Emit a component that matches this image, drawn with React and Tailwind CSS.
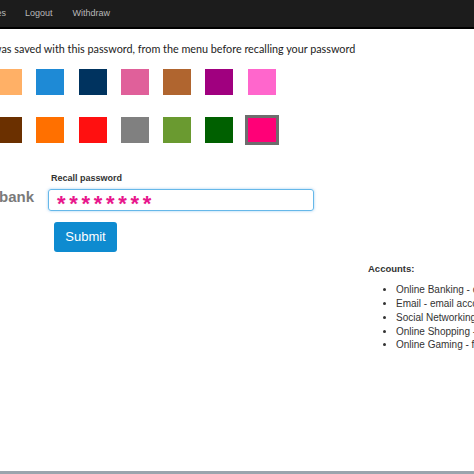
import React from 'react';

const rowOne = ['#ffb066', '#1e8ad6', '#00335f', '#e0609a', '#b0652f', '#a0007f', '#ff66cc'];
const rowTwo = ['#6b3000', '#ff7000', '#ff1010', '#808080', '#6a9a30', '#006000', '#ff0077'];

const accounts = [
  'Online Banking - online bank account',
  'Email - email account',
  'Social Networking - social site',
  'Online Shopping - shopping site',
  'Online Gaming - fun games',
];

function Swatch({ color, selected }) {
  if (selected) {
    return (
      <div className="w-[34px] h-[30px] -ml-[3px] -mt-[2px] bg-[#6d6d6d] p-[3px] shrink-0">
        <div className="w-full h-full" style={{ backgroundColor: color }} />
      </div>
    );
  }
  return <div className="w-[28px] h-[26px] shrink-0" style={{ backgroundColor: color }} />;
}

export default function App() {
  return (
    <div className="w-[474px] h-[474px] overflow-hidden bg-white relative font-['Liberation_Sans',Arial,sans-serif]">
      {/* top nav */}
      <div className="h-[29px] bg-[#1c1c1c] border-b-2 border-black flex items-center text-[9px] text-[#b8b8b8]">
        <span className="-ml-[17px]">Rules</span>
        <span className="ml-[19px]">Logout</span>
        <span className="ml-[20px]">Withdraw</span>
      </div>

      {/* instructions */}
      <p className="mt-[12px] -ml-[7px] text-[10.8px] text-[#222] font-['Lato','Open_Sans',sans-serif] whitespace-nowrap">
        was saved with this password, from the menu before recalling your password
      </p>

      {/* colour rows */}
      <div className="mt-[12px] -ml-[6px] flex gap-[14.3px]">
        {rowOne.map((c) => (
          <Swatch key={c} color={c} />
        ))}
      </div>
      <div className="mt-[22px] -ml-[6px] flex gap-[14.3px]">
        {rowTwo.map((c, i) => (
          <Swatch key={c} color={c} selected={i === 6} />
        ))}
      </div>

      {/* recall form */}
      <div className="mt-[27px] flex">
        <div className="w-[48px] pt-[14px] -ml-[1px] text-[15px] font-bold text-[#7a7a7a]">bank</div>
        <div className="flex flex-col ml-[1px]">
          <label className="ml-[3px] text-[9px] font-bold text-[#333]">Recall password</label>
          <div className="mt-[3px] w-[266px] h-[22px] rounded-[3px] border border-[#66b8e9] shadow-[0_0_3px_rgba(102,175,233,0.6)] flex items-center pl-[8px]">
            <span className="text-[22px] font-bold text-[#e8168c] tracking-[3.7px] leading-none mt-[8px]">********</span>
          </div>
          <button className="mt-[11px] ml-[6px] w-[63px] h-[30px] rounded-[3px] bg-[#0e8bd0] text-white text-[13px]">
            Submit
          </button>
        </div>
      </div>

      {/* accounts */}
      <div className="absolute left-[368px] top-[262px] text-[10px] text-[#333] whitespace-nowrap">
        <div className="font-bold text-[9.5px]">Accounts:</div>
        <ul className="mt-[7px] ml-[28px] list-disc leading-[13.8px]">
          {accounts.map((a) => (
            <li key={a}>{a}</li>
          ))}
        </ul>
      </div>

      {/* bottom strip */}
      <div className="absolute left-0 right-0 bottom-0 h-[3px] bg-[#9aa4ad]" />
    </div>
  );
}
